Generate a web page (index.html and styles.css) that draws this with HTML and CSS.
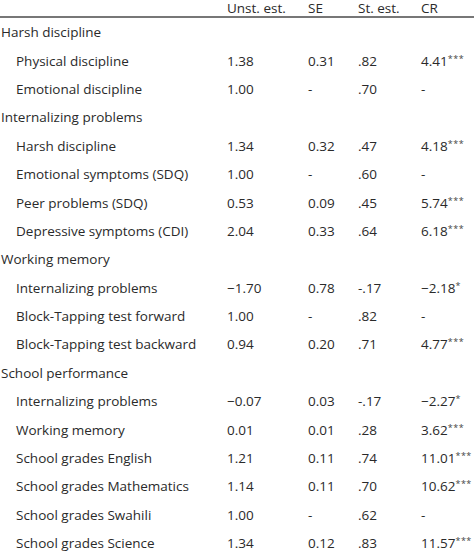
FILE: index.html
```html
<!DOCTYPE html>
<html>
<head>
<meta charset="utf-8">
<link rel="stylesheet" href="styles.css">
</head>
<body>
<div class="table">
  <div class="row head">
    <div class="c0"></div><div class="c1">Unst. est.</div><div class="c2">SE</div><div class="c3">St. est.</div><div class="c4">CR</div>
  </div>
  <div class="row"><div class="c0 grp">Harsh discipline</div><div></div><div></div><div></div><div></div></div>
  <div class="row"><div class="c0 sub">Physical discipline</div><div>1.38</div><div>0.31</div><div>.82</div><div>4.41<sup>***</sup></div></div>
  <div class="row"><div class="c0 sub">Emotional discipline</div><div>1.00</div><div>-</div><div>.70</div><div>-</div></div>
  <div class="row"><div class="c0 grp">Internalizing problems</div><div></div><div></div><div></div><div></div></div>
  <div class="row"><div class="c0 sub">Harsh discipline</div><div>1.34</div><div>0.32</div><div>.47</div><div>4.18<sup>***</sup></div></div>
  <div class="row"><div class="c0 sub">Emotional symptoms (SDQ)</div><div>1.00</div><div>-</div><div>.60</div><div>-</div></div>
  <div class="row"><div class="c0 sub">Peer problems (SDQ)</div><div>0.53</div><div>0.09</div><div>.45</div><div>5.74<sup>***</sup></div></div>
  <div class="row"><div class="c0 sub">Depressive symptoms (CDI)</div><div>2.04</div><div>0.33</div><div>.64</div><div>6.18<sup>***</sup></div></div>
  <div class="row"><div class="c0 grp">Working memory</div><div></div><div></div><div></div><div></div></div>
  <div class="row"><div class="c0 sub">Internalizing problems</div><div>−1.70</div><div>0.78</div><div>-.17</div><div>−2.18<sup>*</sup></div></div>
  <div class="row"><div class="c0 sub">Block-Tapping test forward</div><div>1.00</div><div>-</div><div>.82</div><div>-</div></div>
  <div class="row"><div class="c0 sub">Block-Tapping test backward</div><div>0.94</div><div>0.20</div><div>.71</div><div>4.77<sup>***</sup></div></div>
  <div class="row"><div class="c0 grp">School performance</div><div></div><div></div><div></div><div></div></div>
  <div class="row"><div class="c0 sub">Internalizing problems</div><div>−0.07</div><div>0.03</div><div>-.17</div><div>−2.27<sup>*</sup></div></div>
  <div class="row"><div class="c0 sub">Working memory</div><div>0.01</div><div>0.01</div><div>.28</div><div>3.62<sup>***</sup></div></div>
  <div class="row"><div class="c0 sub">School grades English</div><div>1.21</div><div>0.11</div><div>.74</div><div>11.01<sup>***</sup></div></div>
  <div class="row"><div class="c0 sub">School grades Mathematics</div><div>1.14</div><div>0.11</div><div>.70</div><div>10.62<sup>***</sup></div></div>
  <div class="row"><div class="c0 sub">School grades Swahili</div><div>1.00</div><div>-</div><div>.62</div><div>-</div></div>
  <div class="row"><div class="c0 sub">School grades Science</div><div>1.34</div><div>0.12</div><div>.83</div><div>11.57<sup>***</sup></div></div>
</div>
</body>
</html>
```
FILE: styles.css
```css
html, body {
  margin: 0;
  padding: 0;
  background: #ffffff;
}
body {
  font-family: "Open Sans", "DejaVu Sans", sans-serif;
  font-size: 13.5px;
  color: #2a2a2a;
  overflow: hidden;
}
.table {
  width: 474px;
}
.row {
  display: grid;
  grid-template-columns: 227px 81px 50px 63px 53px;
  height: 28.4px;
  align-items: center;
  white-space: nowrap;
}
.row.head {
  height: 18px;
  line-height: 17px;
  align-items: start;
  border-bottom: 2px solid #777777;
  box-sizing: border-box;
}
.grp {
  padding-left: 1px;
}
.sub {
  padding-left: 16px;
}
sup {
  font-size: 9px;
  vertical-align: 4px;
  line-height: 0;
  letter-spacing: 0.5px;
  color: #444444;
}
```
